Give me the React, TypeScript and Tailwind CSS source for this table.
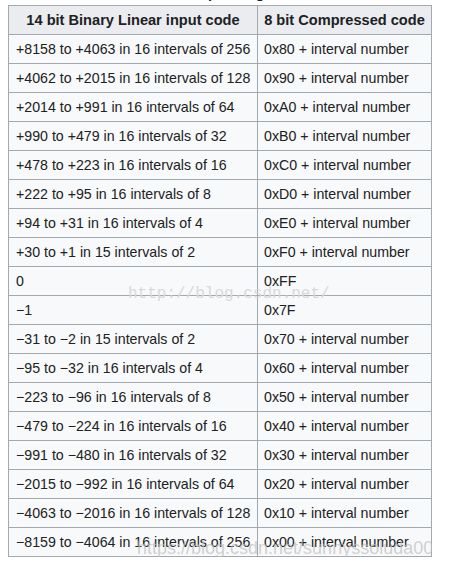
import React from 'react'

/**
 * 14 bit -> 8 bit companding table (wikitable style)
 */

const rows: [string, string][] = [
  ['+8158 to +4063 in 16 intervals of 256', '0x80 + interval number'],
  ['+4062 to +2015 in 16 intervals of 128', '0x90 + interval number'],
  ['+2014 to +991 in 16 intervals of 64', '0xA0 + interval number'],
  ['+990 to +479 in 16 intervals of 32', '0xB0 + interval number'],
  ['+478 to +223 in 16 intervals of 16', '0xC0 + interval number'],
  ['+222 to +95 in 16 intervals of 8', '0xD0 + interval number'],
  ['+94 to +31 in 16 intervals of 4', '0xE0 + interval number'],
  ['+30 to +1 in 15 intervals of 2', '0xF0 + interval number'],
  ['0', '0xFF'],
  ['\u22121', '0x7F'],
  ['\u221231 to \u22122 in 15 intervals of 2', '0x70 + interval number'],
  ['\u221295 to \u221232 in 16 intervals of 4', '0x60 + interval number'],
  ['\u2212223 to \u221296 in 16 intervals of 8', '0x50 + interval number'],
  ['\u2212479 to \u2212224 in 16 intervals of 16', '0x40 + interval number'],
  ['\u2212991 to \u2212480 in 16 intervals of 32', '0x30 + interval number'],
  ['\u22122015 to \u2212992 in 16 intervals of 64', '0x20 + interval number'],
  ['\u22124063 to \u22122016 in 16 intervals of 128', '0x10 + interval number'],
  ['\u22128159 to \u22124064 in 16 intervals of 256', '0x00 + interval number'],
]

export default function App() {
  return (
    <div className="min-h-screen bg-white pl-[8px] text-[#202122] font-['Liberation_Sans',Arial,sans-serif]">
      {/* caption, mostly scrolled off the top */}
      <div className="w-[424px] h-[5px] overflow-hidden">
        <div className="-mt-[15px] text-center text-[14.5px] font-bold leading-[16px]">Companding</div>
      </div>

      <div className="relative w-[424px] overflow-hidden">
        <table className="w-[424px] border-collapse border border-[#a2a9b1] text-[14.2px] leading-[18px]">
          <thead>
            <tr className="h-[29px] bg-[#eaecf0]">
              <th className="w-[249px] border border-[#a2a9b1] px-[6px] text-center text-[14.6px] font-bold">
                14 bit Binary Linear input code
              </th>
              <th className="border border-[#a2a9b1] px-[4px] text-center text-[14.6px] font-bold">
                8 bit Compressed code
              </th>
            </tr>
          </thead>
          <tbody>
            {rows.map(([a, b]) => (
              <tr key={a} className="h-[29px] bg-[#f8f9fa]">
                <td className="border border-[#a2a9b1] pl-[7px] pr-[3px] whitespace-nowrap">{a}</td>
                <td className="border border-[#a2a9b1] pl-[6px] pr-[3px] whitespace-nowrap">{b}</td>
              </tr>
            ))}
          </tbody>
        </table>

        {/* watermarks */}
        <div className="pointer-events-none absolute left-[120px] top-[281px] text-[16px] leading-[16px] text-[#d9d9d9] font-['Liberation_Mono',monospace]">
          http://blog.csdn.net/
        </div>
        <div className="pointer-events-none absolute left-[129px] top-[533px] text-[18px] leading-[20px] text-[#bdbdbd]/70 font-['Liberation_Sans',sans-serif] whitespace-nowrap">
          https://blog.csdn.net/sunnyssoluda008
        </div>
      </div>
    </div>
  )
}
